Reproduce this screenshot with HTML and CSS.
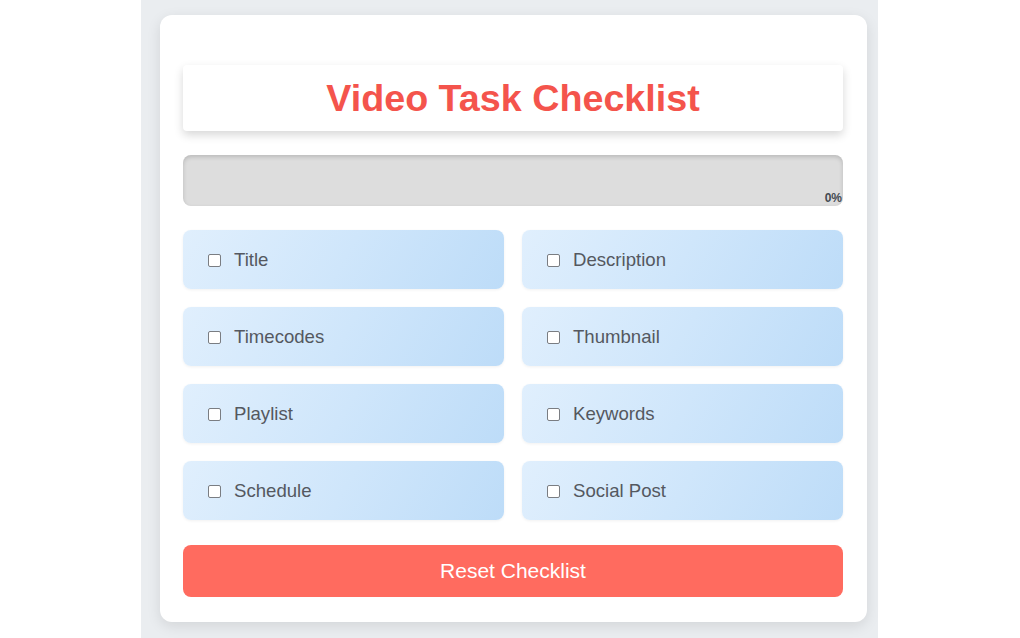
FILE: index.html
```html
<!DOCTYPE html>
<html lang="en">
<head>
<meta charset="utf-8">
<title>Video Task Checklist</title>
<link rel="stylesheet" href="styles.css">
</head>
<body>
<div class="page">
  <div class="card">
    <h1 class="title-box">Video Task Checklist</h1>
    <div class="progress"><span class="progress-label">0%</span></div>
    <div class="grid">
      <label class="item"><input type="checkbox" class="check"><span>Title</span></label>
      <label class="item"><input type="checkbox" class="check"><span>Description</span></label>
      <label class="item"><input type="checkbox" class="check"><span>Timecodes</span></label>
      <label class="item"><input type="checkbox" class="check"><span>Thumbnail</span></label>
      <label class="item"><input type="checkbox" class="check"><span>Playlist</span></label>
      <label class="item"><input type="checkbox" class="check"><span>Keywords</span></label>
      <label class="item"><input type="checkbox" class="check"><span>Schedule</span></label>
      <label class="item"><input type="checkbox" class="check"><span>Social Post</span></label>
    </div>
    <button class="reset">Reset Checklist</button>
  </div>
</div>
</body>
</html>
```
FILE: styles.css
```css
* { box-sizing: border-box; }
html, body { margin: 0; padding: 0; background: #ffffff; }
body { font-family: "Liberation Sans", Arial, sans-serif; }

.page {
  width: 737px;
  min-height: 638px;
  margin-left: 141px;
  background: #eaedf0;
  padding-top: 15px;
}

.card {
  margin: 0 11px 0 19px;
  background: #ffffff;
  border-radius: 12px;
  box-shadow: 0 4px 14px rgba(0, 0, 0, 0.10);
  padding: 50px 24px 25px 23px;
}

.title-box {
  margin: 0 0 24px;
  height: 66px;
  display: flex;
  align-items: center;
  justify-content: center;
  background: #ffffff;
  border-radius: 4px;
  box-shadow: 0 4px 10px rgba(0, 0, 0, 0.16);
  color: #f4544c;
  font-size: 37.7px;
  font-weight: bold;
}

.progress {
  height: 51px;
  background: #dddddd;
  border-radius: 8px;
  box-shadow: inset 0 2px 4px rgba(0, 0, 0, 0.16);
  display: flex;
  align-items: flex-end;
  justify-content: flex-end;
  padding: 0 1px 1px 0;
  margin-bottom: 24px;
}

.progress-label {
  font-size: 12px;
  font-weight: bold;
  color: #444a52;
}

.grid {
  display: grid;
  grid-template-columns: 1fr 1fr;
  grid-auto-rows: 59px;
  gap: 18px 18px;
  margin-bottom: 25px;
}

.item {
  display: flex;
  align-items: center;
  padding-left: 25px;
  border-radius: 8px;
  background: linear-gradient(120deg, #e0effd 0%, #cfe6fb 50%, #bddcf8 100%);
  box-shadow: 0 1px 3px rgba(0, 0, 0, 0.06);
  color: #545860;
  font-size: 18.6px;
}

.check {
  appearance: none;
  -webkit-appearance: none;
  width: 13px;
  height: 13px;
  margin: 1px 13px 0 0;
  border: 1.5px solid #7a7d82;
  border-radius: 2px;
  background: #ffffff;
}

.reset {
  display: block;
  width: 100%;
  height: 52px;
  border: none;
  border-radius: 8px;
  background: #ff6b5f;
  color: #ffffff;
  font-family: "Liberation Sans", Arial, sans-serif;
  font-size: 21px;
}
```
